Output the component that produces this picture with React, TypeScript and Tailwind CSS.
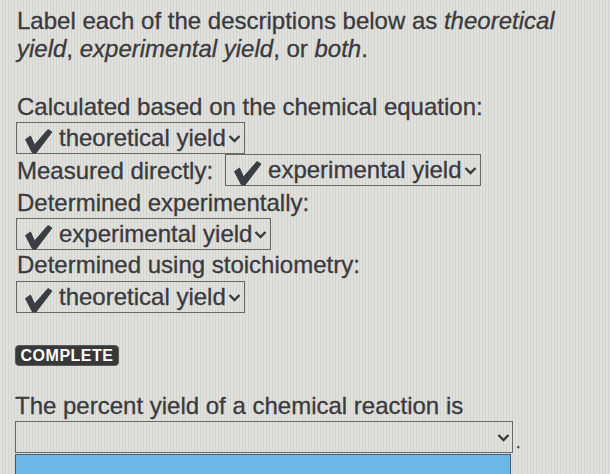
import React from "react";

const Check = () => (
  <svg width="28" height="28" viewBox="0 0 28 28" className="shrink-0">
    <path
      d="M0.5 13.5 L5.5 10 L9.5 19 L23 3.5 L27 6 L11 27 L7.5 27 Z"
      fill="#3a3d42"
      stroke="#3a3d42"
      strokeWidth="1"
      strokeLinejoin="round"
    />
  </svg>
);

const Chevron = () => (
  <svg width="13" height="9" viewBox="0 0 13 9" className="shrink-0">
    <path d="M1.5 2 L6.5 7 L11.5 2" fill="none" stroke="#3a3a3a" strokeWidth="2.4" />
  </svg>
);

const Select = ({ value }: { value: string }) => (
  <div className="flex h-[32px] w-fit items-start border border-[#686868] pl-[8px] pr-[3px]">
    <div className="mt-[3px]">
      <Check />
    </div>
    <span className="ml-[6px] self-center leading-[28px]">{value}</span>
    <div className="ml-[2px] self-center">
      <Chevron />
    </div>
  </div>
);

export default function App() {
  return (
    <div
      className="h-[474px] w-[610px] overflow-hidden bg-[#dbdbd8] bg-[repeating-linear-gradient(90deg,#e0e0dd_0px,#e0e0dd_2px,#d3d3d0_2px,#d3d3d0_3px)] text-[24px] leading-[28px] text-[#3a3a3d] [-webkit-text-stroke:0.3px_#3a3a3d]"
      style={{ fontFamily: '"Liberation Sans", Arial, sans-serif' }}
    >
      <div className="pl-[17px] pt-[7px]">
        <p>
          Label each of the descriptions below as <i>theoretical</i>
        </p>
        <p>
          <i>yield</i>, <i>experimental yield</i>, or <i>both</i>.
        </p>
        <p className="mt-[30px]">Calculated based on the chemical equation:</p>
        <div className="mt-[1px] -ml-[1px]">
          <Select value="theoretical yield" />
        </div>
        <div className="flex items-center">
          <span className="mt-[2px]">Measured directly:</span>
          <div className="ml-[12px]">
            <Select value="experimental yield" />
          </div>
        </div>
        <p className="mt-[3px]">Determined experimentally:</p>
        <div className="mt-[1px] -ml-[1px]">
          <Select value="experimental yield" />
        </div>
        <p className="mt-[1px]">Determined using stoichiometry:</p>
        <div className="mt-[2px] -ml-[1px]">
          <Select value="theoretical yield" />
        </div>
      </div>
      <div className="pl-[15px]">
        <div className="mt-[32px] flex h-[21px] w-[104px] items-center justify-center rounded-[4px] border border-[#5a5a5a] bg-[#383838] text-[16px] font-bold leading-none tracking-[0.5px] text-white [-webkit-text-stroke:0px]">
          COMPLETE
        </div>
        <p className="mt-[26px]">The percent yield of a chemical reaction is</p>
        <div className="mt-[1px] flex items-end">
          <div className="flex h-[32px] w-[498px] items-center justify-end border border-[#686868] pr-[2px]">
            <Chevron />
          </div>
          <span className="mb-[2px] ml-[3px] text-[16px] leading-none">.</span>
        </div>
        <div className="mt-[1px] h-[40px] w-[496px] border border-[#3f5f78] bg-[#6bb8e7]" />
      </div>
    </div>
  );
}
